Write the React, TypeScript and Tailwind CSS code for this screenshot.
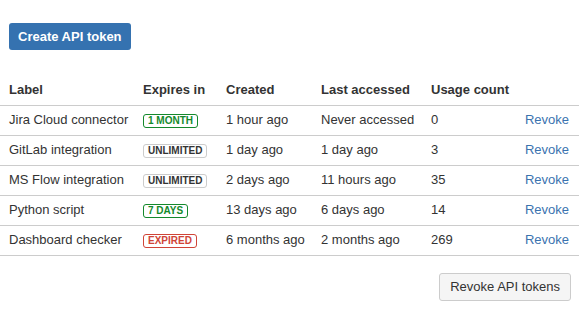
import React from "react";

type Expiry = "green" | "gray" | "red";

interface TokenRow {
  label: string;
  expires: string;
  kind: Expiry;
  created: string;
  lastAccessed: string;
  usage: number;
}

const rows: TokenRow[] = [
  { label: "Jira Cloud connector", expires: "1 month", kind: "green", created: "1 hour ago", lastAccessed: "Never accessed", usage: 0 },
  { label: "GitLab integration", expires: "Unlimited", kind: "gray", created: "1 day ago", lastAccessed: "1 day ago", usage: 3 },
  { label: "MS Flow integration", expires: "Unlimited", kind: "gray", created: "2 days ago", lastAccessed: "11 hours ago", usage: 35 },
  { label: "Python script", expires: "7 days", kind: "green", created: "13 days ago", lastAccessed: "6 days ago", usage: 14 },
  { label: "Dashboard checker", expires: "Expired", kind: "red", created: "6 months ago", lastAccessed: "2 months ago", usage: 269 },
];

const lozengeStyles: Record<Expiry, string> = {
  green: "border-[#14892c] text-[#14892c]",
  gray: "border-[#cccccc] text-[#333333]",
  red: "border-[#d04437] text-[#d04437]",
};

const Lozenge = ({ text, kind }: { text: string; kind: Expiry }) => (
  <span className={`inline-block rounded-[3px] border px-[4px] align-middle text-[10px] font-bold uppercase leading-[12px] ${lozengeStyles[kind]}`}>
    {text}
  </span>
);

const App = () => {
  return (
    <div className="w-[580px] h-[330px] bg-white pt-[23px] font-['Liberation_Sans',Arial,sans-serif] text-[13px] text-[#333333]">
      <button className="ml-[9px] h-[27px] rounded-[3px] bg-[#3572b0] px-[9px] text-[13px] font-bold text-white">
        Create API token
      </button>

      <table className="mt-[25px] w-[579px] table-fixed border-collapse">
        <colgroup>
          <col className="w-[134px]" />
          <col className="w-[83px]" />
          <col className="w-[95px]" />
          <col className="w-[110px]" />
          <col className="w-[95px]" />
          <col />
        </colgroup>
        <thead>
          <tr className="h-[30px] border-b border-[#cccccc] text-left">
            <th className="pl-[9px] font-bold">Label</th>
            <th className="pl-[9px] font-bold">Expires in</th>
            <th className="pl-[9px] font-bold">Created</th>
            <th className="pl-[9px] font-bold">Last accessed</th>
            <th className="pl-[9px] font-bold">Usage count</th>
            <th></th>
          </tr>
        </thead>
        <tbody>
          {rows.map((row) => (
            <tr key={row.label} className="h-[30px] border-b border-[#cccccc]">
              <td className="pl-[9px] whitespace-nowrap">{row.label}</td>
              <td className="pl-[9px]">
                <Lozenge text={row.expires} kind={row.kind} />
              </td>
              <td className="pl-[9px] whitespace-nowrap">{row.created}</td>
              <td className="pl-[9px] whitespace-nowrap">{row.lastAccessed}</td>
              <td className="pl-[9px]">{row.usage}</td>
              <td className="pr-[10px] text-right">
                <a href="#" className="text-[#3b73af]">Revoke</a>
              </td>
            </tr>
          ))}
        </tbody>
      </table>

      <div className="mt-[17px] flex justify-end pr-[9px]">
        <button className="h-[28px] rounded-[3px] border border-[#cccccc] bg-[#f5f5f5] px-[10px] text-[13px] text-[#333333]">
          Revoke API tokens
        </button>
      </div>
    </div>
  );
};

export default App;
